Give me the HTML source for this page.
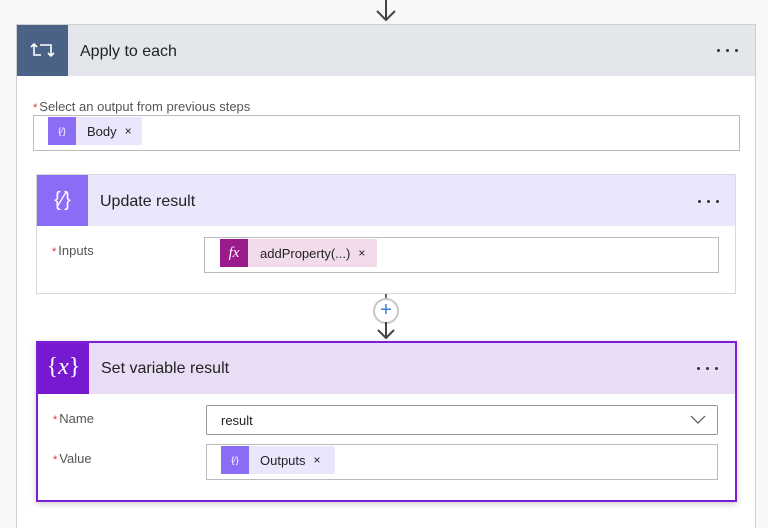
<!DOCTYPE html>
<html style="overflow:hidden;height:528px;width:768px"><head><meta charset="utf-8"><style>
*{box-sizing:border-box;margin:0;padding:0}
body{width:768px;height:528px;background:#f8f8f8;position:relative;overflow:hidden;font-family:"Segoe UI","Liberation Sans",sans-serif;color:#333}
.a{position:absolute}
.dots{position:absolute;width:22px;height:4px}
.dots i{position:absolute;top:0;width:3px;height:3px;border-radius:50%;background:#333}
.lbl{font-size:13px;color:#555}
.lbl b{color:#d13438;font-weight:normal;font-size:11px;margin-right:2px}
.tok{position:absolute;display:flex;align-items:center;height:28px;font-size:13px;color:#222}
.tok .ic{width:28px;height:28px;display:flex;align-items:center;justify-content:center;color:#fff}
.tok .x{font-size:12px;margin-left:8px}
</style></head><body>
<svg class="a" style="left:374px;top:0" width="24" height="24"><path d="M12 0V19M3 11L12 20L21 11" stroke="#444" stroke-width="2" fill="none"/></svg>
<div class="a" style="left:16px;top:24px;width:740px;height:510px;background:#fff;border:1px solid #d0d0d0"></div>
<div class="a" style="left:17px;top:25px;width:738px;height:51px;background:#e3e6eb"></div>
<div class="a" style="left:17px;top:25px;width:51px;height:51px;background:#4b6287"></div>
<svg class="a" style="left:30px;top:40px" width="26" height="20"><path d="M4 4V15H11M21 16V5H10" stroke="#fff" stroke-width="1.6" fill="none"/><path d="M1 7L4 4L7 7M18 13L21 16L24 13" stroke="#fff" stroke-width="1.6" fill="none"/></svg>
<div class="a" style="left:80px;top:43px;font-size:16px;color:#222">Apply to each</div>
<div class="dots" style="left:717px;top:49px"><i style="left:0"></i><i style="left:9px"></i><i style="left:18px"></i></div>
<div class="a lbl" style="left:33px;top:99px"><b>*</b>Select an output from previous steps</div>
<div class="a" style="left:33px;top:115px;width:707px;height:36px;border:1px solid #bbb"></div>
<div class="tok" style="left:48px;top:117px;background:#ece6fc;width:94px"><div class="ic" style="background:#8b6cf5;font-size:9px">{⁄}</div><span style="margin-left:11px">Body</span><span class="x">×</span></div>
<div class="a" style="left:36px;top:174px;width:700px;height:120px;background:#fff;border:1px solid #d8d8d8"></div>
<div class="a" style="left:37px;top:175px;width:698px;height:51px;background:#ece6fd"></div>
<div class="a" style="left:37px;top:175px;width:51px;height:51px;background:#8b6cf7;color:#fff;font-size:20px;text-align:center;line-height:50px">{⁄}</div>
<div class="a" style="left:100px;top:193px;font-size:16px;color:#222">Update result</div>
<div class="dots" style="left:698px;top:200px"><i style="left:0"></i><i style="left:9px"></i><i style="left:18px"></i></div>
<div class="a lbl" style="left:52px;top:243px"><b>*</b>Inputs</div>
<div class="a" style="left:204px;top:237px;width:515px;height:36px;border:1px solid #bbb"></div>
<div class="tok" style="left:220px;top:239px;background:#f2dcec;width:157px"><div class="ic" style="background:#9b1a8c;font-family:'Liberation Serif',serif;font-style:italic;font-size:15px">fx</div><span style="margin-left:12px">addProperty(...)</span><span class="x">×</span></div>
<div class="a" style="left:385px;top:294px;width:2px;height:6px;background:#666"></div>
<div class="a" style="left:373px;top:298px;width:26px;height:26px;border:2px solid #c8c8c8;border-radius:50%;background:#fff;color:#3a7bd5;font-size:20px;line-height:20px;text-align:center">+</div>
<svg class="a" style="left:374px;top:322px" width="24" height="18"><path d="M12 0V16M4 8L12 16L20 8" stroke="#444" stroke-width="2" fill="none"/></svg>
<div class="a" style="left:36px;top:341px;width:701px;height:161px;background:#fff;border:2px solid #7a1fd6;box-shadow:0 2px 6px rgba(0,0,0,.2)"></div>
<div class="a" style="left:38px;top:343px;width:697px;height:51px;background:#e9dcf5"></div>
<div class="a" style="left:38px;top:343px;width:51px;height:51px;background:#7719d0;color:#fff;font-size:24px;text-align:center;line-height:48px;font-family:'Liberation Serif',serif">{<i>x</i>}</div>
<div class="a" style="left:101px;top:360px;font-size:16px;color:#222">Set variable result</div>
<div class="dots" style="left:697px;top:367px"><i style="left:0"></i><i style="left:9px"></i><i style="left:18px"></i></div>
<div class="a lbl" style="left:53px;top:411px"><b>*</b>Name</div>
<div class="a" style="left:206px;top:405px;width:512px;height:30px;border:1px solid #999;border-radius:2px;font-size:13px;padding:7px 14px;color:#222">result</div>
<svg class="a" style="left:690px;top:415px" width="16" height="10"><path d="M1 1L8 8L15 1" stroke="#555" stroke-width="1.2" fill="none"/></svg>
<div class="a lbl" style="left:53px;top:451px"><b>*</b>Value</div>
<div class="a" style="left:206px;top:444px;width:512px;height:36px;border:1px solid #bbb"></div>
<div class="tok" style="left:221px;top:446px;background:#ece6fc;width:114px"><div class="ic" style="background:#8b6cf5;font-size:9px">{⁄}</div><span style="margin-left:11px">Outputs</span><span class="x">×</span></div>
</body></html>
